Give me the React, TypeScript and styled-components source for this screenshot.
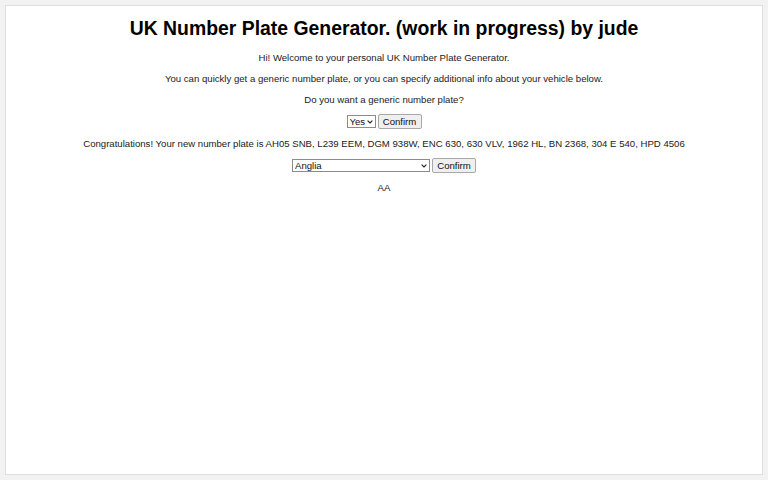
import React, { useState } from 'react'
import styled, { createGlobalStyle } from 'styled-components'

const GlobalStyle = createGlobalStyle`
  html, body {
    margin: 0;
    padding: 0;
    background: #f2f2f2;
  }
  #root {
    padding: 5px;
  }
`;

const regions = ['Anglia', 'Birmingham', 'Cymru', 'Deeside', 'Essex', 'Forest and Fens', 'Garston', 'Hampshire and Dorset']

const plates = 'AH05 SNB, L239 EEM, DGM 938W, ENC 630, 630 VLV, 1962 HL, BN 2368, 304 E 540, HPD 4506'

const Chevron: React.FC = () => (
  <ChevronIcon width="6" height="4" viewBox="0 0 6 4">
    <path d="M0.6 0.6 L3 3 L5.4 0.6" fill="none" stroke="#222" strokeWidth="1.1" />
  </ChevronIcon>
)

const App: React.FC = () => {
  const [generic, setGeneric] = useState('Yes');
  const [region, setRegion] = useState('Anglia');

  return (
    <>
      <GlobalStyle />
      <Frame>
        <Title>UK Number Plate Generator. (work in progress) by jude</Title>
        <Text>Hi! Welcome to your personal UK Number Plate Generator.</Text>
        <Text>You can quickly get a generic number plate, or you can specify additional info about your vehicle below.</Text>
        <Text>Do you want a generic number plate?</Text>
        <FormRow>
          <SelectWrap>
            <Select $width={29} value={generic} onChange={(e) => setGeneric(e.target.value)}>
              <option>Yes</option>
              <option>No</option>
            </Select>
            <Chevron />
          </SelectWrap>
          <Button>Confirm</Button>
        </FormRow>
        <Text>Congratulations! Your new number plate is {plates}</Text>
        <FormRow>
          <SelectWrap>
            <Select $width={138} value={region} onChange={(e) => setRegion(e.target.value)}>
              {regions.map((r) => <option key={r}>{r}</option>)}
            </Select>
            <Chevron />
          </SelectWrap>
          <Button>Confirm</Button>
        </FormRow>
        <Text>AA</Text>
      </Frame>
    </>
  )
}

export default App

const Frame = styled.div`
box-sizing: border-box;
height: 470px;
background: #ffffff;
border: 1px solid #dedede;
text-align: center;
font-family: "Liberation Sans", Arial, sans-serif;
font-size: 9.6px;
color: #1a1a1a;
display: flow-root;
`;

const Title = styled.h1`
font-size: 19.4px;
font-weight: 700;
margin: 11px 0 12px;
color: #000;
`;

const Text = styled.p`
margin: 10px 0;
line-height: 11px;
`;

const FormRow = styled.div`
display: flex;
justify-content: center;
align-items: center;
gap: 2px;
height: 13px;
`;

const SelectWrap = styled.div`
position: relative;
display: flex;
`;

const Select = styled.select<{ $width: number }>`
appearance: none;
-webkit-appearance: none;
box-sizing: border-box;
width: ${(p) => p.$width}px;
height: 13px;
margin: 0;
padding: 0 9px 0 2px;
border: 1px solid #8c8c8c;
border-radius: 0;
background: #fff;
color: #111;
font-family: "Liberation Sans", Arial, sans-serif;
font-size: 9.6px;
line-height: 11px;
text-align: left;
outline: none;
`;

const ChevronIcon = styled.svg`
position: absolute;
right: 3px;
top: 5px;
pointer-events: none;
`;

const Button = styled.button`
box-sizing: border-box;
height: 15px;
width: 44px;
margin: 0;
padding: 0;
background: #efefef;
border: 1px solid #a8a8a8;
border-radius: 2px;
color: #111;
font-family: "Liberation Sans", Arial, sans-serif;
font-size: 9.6px;
line-height: 13px;
`;
